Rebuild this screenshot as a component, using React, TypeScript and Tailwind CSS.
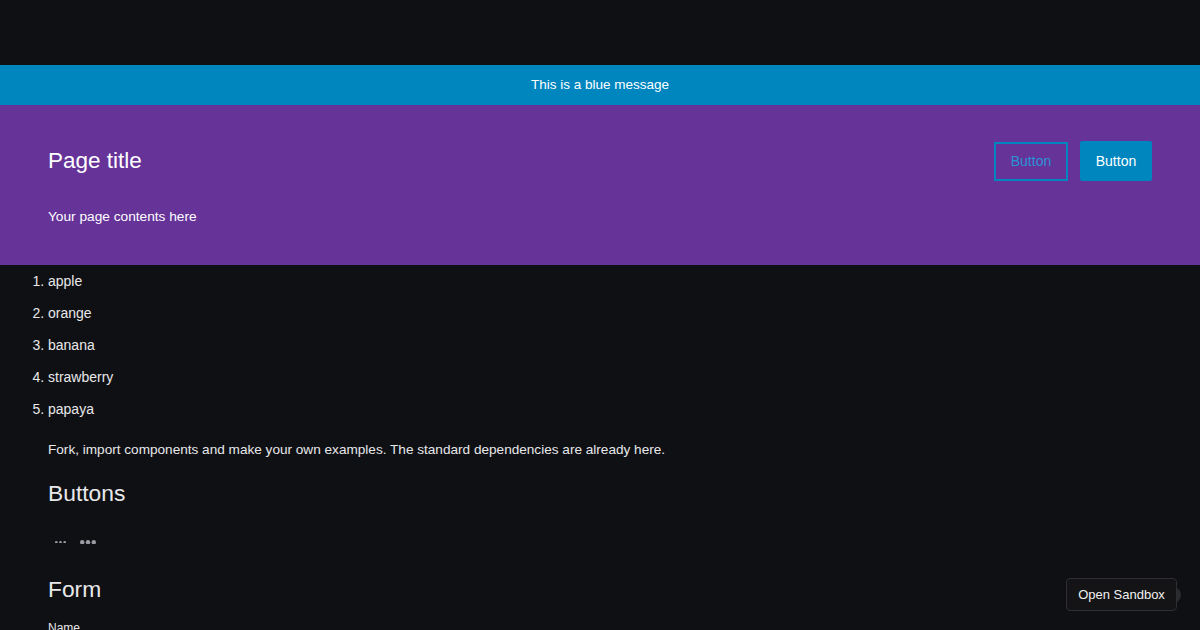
const FRUITS = ["apple", "orange", "banana", "strawberry", "papaya"];

function Dots({ r, gap }: { r: number; gap: number }) {
  const w = r * 2 * 3 + gap * 2;
  return (
    <svg width={w} height={r * 2} viewBox={`0 0 ${w} ${r * 2}`} fill="#9b9ca3">
      {[0, 1, 2].map((i) => (
        <circle key={i} cx={r + i * (r * 2 + gap)} cy={r} r={r} />
      ))}
    </svg>
  );
}

export default function App() {
  return (
    <div
      className="min-h-[630px] bg-[#0f1014] text-[#e8e8ea] pt-[65px]"
      style={{ fontFamily: '"Liberation Sans", Arial, sans-serif' }}
    >
      <div className="h-10 bg-[#0086bf] flex items-center justify-center text-[13.5px] text-white">
        This is a blue message
      </div>

      <div className="h-[160px] bg-[#663399] px-12 pt-9">
        <div className="flex items-center justify-between h-10">
          <h1 className="text-[22.5px] text-white">Page title</h1>
          <div className="flex items-center gap-3">
            <button
              type="button"
              className="h-[39px] w-[74px] border-2 border-[#0086bf] text-sm text-[#2a93d4]"
            >
              Button
            </button>
            <button
              type="button"
              className="h-10 w-[72px] bg-[#0086bf] text-sm text-white rounded-[2px]"
            >
              Button
            </button>
          </div>
        </div>
        <p className="mt-[26px] text-[13.7px] leading-5 text-white">Your page contents here</p>
      </div>

      <ol className="list-decimal pl-12 text-sm leading-5">
        {FRUITS.map((f) => (
          <li key={f} className="py-[6px]">
            {f}
          </li>
        ))}
      </ol>

      <div className="px-12">
        <p className="mt-[15px] text-[13.6px] leading-5">
          Fork, import components and make your own examples. The standard dependencies are
          already here.
        </p>
        <h2 className="mt-[19px] text-[22.8px] leading-7">Buttons</h2>
        <div className="mt-[30px] flex items-center gap-[14px] h-[10px] pl-[7px]">
          <Dots r={1.3} gap={1.6} />
          <Dots r={2.2} gap={1.4} />
        </div>
        <h2 className="mt-[28px] text-[22.8px] leading-7">Form</h2>
        <label className="block mt-[17px] text-xs">Name</label>
      </div>

      <div className="fixed right-[23px] bottom-[19px]">
        <div className="absolute -right-[4px] top-1/2 -translate-y-1/2 w-4 h-4 rounded-full bg-[#2b2c30]" />
        <button
          type="button"
          className="relative h-[33px] w-[111px] rounded-[4px] border border-[#2e2e33] bg-[#141416] text-[13px] text-[#f0f0f0]"
        >
          Open Sandbox
        </button>
      </div>
    </div>
  );
}
